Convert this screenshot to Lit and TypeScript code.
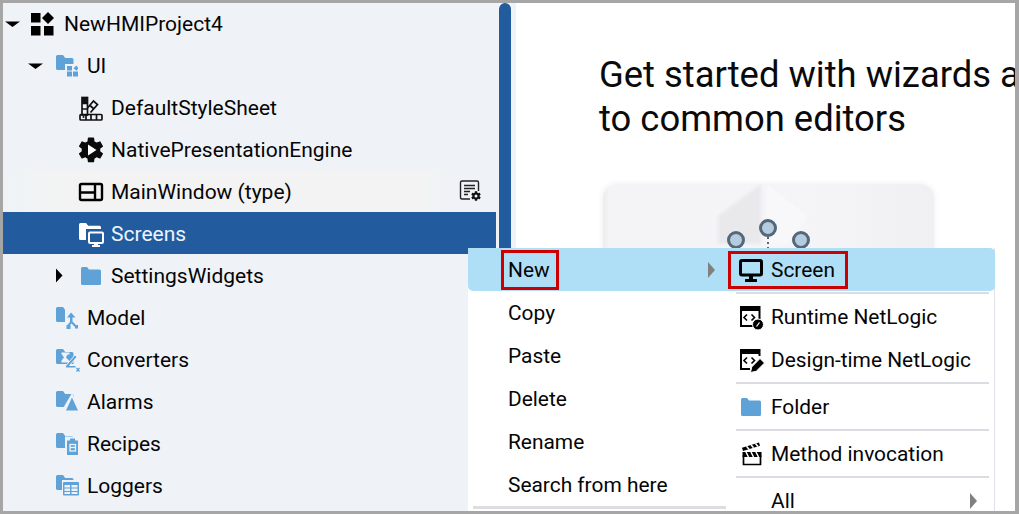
import { LitElement, html, svg, css } from "lit";
import { customElement } from "lit/decorators.js";

const GEAR = "M19.14 12.94c.04-.3.06-.61.06-.94 0-.32-.02-.64-.07-.94l2.03-1.58c.18-.14.23-.41.12-.61l-1.92-3.32c-.12-.22-.37-.29-.59-.22l-2.39.96c-.5-.38-1.03-.7-1.62-.94l-.36-2.54c-.04-.24-.24-.41-.48-.41h-3.84c-.24 0-.43.17-.47.41l-.36 2.54c-.59.24-1.13.57-1.62.94l-2.39-.96c-.22-.08-.47 0-.59.22L2.74 8.87c-.12.21-.08.47.12.61l2.03 1.58c-.05.3-.09.63-.09.94s.02.64.07.94l-2.03 1.58c-.18.14-.23.41-.12.61l1.92 3.32c.12.22.37.29.59.22l2.39-.96c.5.38 1.03.7 1.62.94l.36 2.54c.05.24.24.41.48.41h3.84c.24 0 .44-.17.47-.41l.36-2.54c.59-.24 1.13-.56 1.62-.94l2.39.96c.22.08.47 0 .59-.22l1.92-3.32c.12-.22.07-.47-.12-.61l-2.01-1.58z";
const FOLDER = "M4 3.5A1.5 1.5 0 0 1 5.5 2H11l2.2 3H20a1.5 1.5 0 0 1 1.5 1.5V17H5.5A1.5 1.5 0 0 1 4 15.5z";
const BLUE = "#5fa2d8";
const BG = "#eff3f7";

const icons: Record<string, () => unknown> = {
  project: () => html`<svg viewBox="0 0 26 26" width="26" height="26"><rect x="2" y="2" width="9.5" height="9.5"/><path d="M19 1l6 6-6 6-6-6z"/><rect x="2" y="15" width="9.5" height="9.5"/><rect x="15" y="15" width="9.5" height="9.5"/></svg>`,
  ui: () => html`<svg viewBox="0 0 26 26" width="26" height="26" fill="${BLUE}"><path d="${FOLDER}"/><rect x="13" y="11" width="13" height="14" fill="${BG}"/><rect x="15" y="13" width="5" height="4.5"/><path d="M24.2 12.6l2.6 2.6-2.6 2.6-2.6-2.6z"/><rect x="15" y="18.5" width="5" height="5"/><rect x="21" y="18.5" width="5" height="5"/></svg>`,
  style: () => html`<svg viewBox="0 0 26 26" width="26" height="26" fill="none" stroke="#111" stroke-width="1.7" style="overflow:visible"><rect x="6" y="2.5" width="5.5" height="17.5"/><path d="M6 8.3h5.5M6 14h5.5"/><path d="M11.5 13l6-7 4 3.5-7 8" /><path d="M14 10.5l4 3.5" /><rect x="4" y="19.5" width="22" height="5.5" rx="1"/><path d="M10 19.5v5.5M15 19.5v5.5M20.500 19.500v5.500"/><rect x="6" y="3" width="5" height="5" fill="#111" stroke="none"/><circle cx="7.500" cy="22" r="1" fill="#111" stroke="none"/></svg>`,
  engine: () => html`<svg viewBox="0 0 26 26" width="26" height="26" style="overflow:visible"><path transform="translate(-.5 -2.5) scale(1.29)" d="${GEAR}" fill="#0a0a0a"/><path d="M12 7.500l8.500 5.500-8.500 5.500z" fill="#fff"/></svg>`,
  window: () => html`<svg viewBox="0 0 26 26" width="26" height="26" fill="none" stroke="#000" stroke-width="2.400" style="overflow:visible"><rect x="4" y="5" width="22" height="16" rx="1.500"/><path d="M4 13.500h15M19 5v16"/></svg>`,
  screens: () => html`<svg viewBox="0 0 26 26" width="26" height="26" fill="#fff" style="overflow:visible"><path d="M3 3.500A1.500 1.500 0 0 1 4.500 2H10l2.200 2.800H23.500A1.500 1.500 0 0 1 25 6.300V19H4.500A1.500 1.500 0 0 1 3 17.500z"/><rect x="10" y="8" width="19" height="18" fill="#225c9f"/><rect x="13" y="11.500" width="14" height="10.500" rx="1" fill="none" stroke="#fff" stroke-width="2"/><rect x="18" y="22" width="4" height="2"/><rect x="16" y="24" width="8" height="2"/></svg>`,
  folder: () => html`<svg viewBox="0 0 26 26" width="26" height="26" fill="${BLUE}" style="overflow:visible"><path d="M5 5.500A1.500 1.500 0 0 1 6.500 4H11l2 2.500h10.500A1.500 1.500 0 0 1 25 8v12.500a1.500 1.500 0 0 1-1.500 1.500h-17A1.500 1.500 0 0 1 5 20.500z"/></svg>`,
  mfolder: () => html`<svg viewBox="0 0 26 26" width="26" height="26" fill="${BLUE}"><path d="M3 5.500A1.500 1.500 0 0 1 4.500 4H9l2 2.500h10.500A1.500 1.500 0 0 1 23 8v12.500a1.500 1.500 0 0 1-1.500 1.500h-17A1.500 1.500 0 0 1 3 20.500z"/></svg>`,
  model: () => html`<svg viewBox="0 0 26 26" width="26" height="26" fill="${BLUE}"><path d="${FOLDER}"/><rect x="13" y="5" width="13" height="21" fill="${BG}"/><path d="M19 7.500l4.500 5h-3v4l5 5-1.500 1.500-4.500-4.500-3.500 3.500-1-1.500 3-3.500v-4.500h-3z"/><rect x="14.500" y="20" width="4" height="4"/><rect x="23" y="20" width="3.500" height="3.500"/></svg>`,
  conv: () => html`<svg viewBox="0 0 26 26" width="26" height="26" fill="${BLUE}" style="overflow:visible"><path d="${FOLDER}"/><path d="M9.500 5.500h8v2H15.500l-1.500 3 3 3v2h-7.500v-2l2.500-3-2-3h-.500z" fill="${BG}"/><path d="M23 8l2 2-7.500 8.500H24v2.500H13.500v-2z" stroke="${BG}" stroke-width="1"/><path d="M24.500 21l3 3.500M27.500 21l-3 3.500" stroke="${BLUE}" stroke-width="1.300" fill="none"/></svg>`,
  alarm: () => html`<svg viewBox="0 0 26 26" width="26" height="26" fill="${BLUE}" style="overflow:visible"><path d="M4 3.500A1.500 1.500 0 0 1 5.500 2H11l2.200 3H20a1.500 1.500 0 0 1 1.500 1.500V18H5.500A1.500 1.500 0 0 1 4 16.500z"/><path d="M20 4l8 17H10z" fill="${BG}"/><path d="M20 8.500l6 13H14z"/></svg>`,
  recipe: () => html`<svg viewBox="0 0 26 26" width="26" height="26" fill="${BLUE}" style="overflow:visible"><path d="${FOLDER}"/><rect x="13" y="5.500" width="14" height="19" fill="${BG}"/><path d="M15 9.500h3V7.500h5v2h3V24H15z"/><rect x="18" y="13.500" width="5.500" height="6.500" fill="none" stroke="${BG}" stroke-width="1.300"/><path d="M18 16.500h5.500" stroke="${BG}" stroke-width="1.300"/></svg>`,
  logger: () => html`<svg viewBox="0 0 26 26" width="26" height="26" fill="${BLUE}" style="overflow:visible"><path d="${FOLDER}"/><rect x="10" y="7" width="18" height="17" fill="${BG}"/><rect x="11" y="9" width="16" height="13.500" rx="1"/><g fill="${BG}"><rect x="12.500" y="12" width="5.500" height="2.500"/><rect x="19.500" y="12" width="6" height="2.500"/><rect x="12.500" y="15.500" width="5.500" height="2.500"/><rect x="19.500" y="15.500" width="6" height="2.500"/><rect x="12.500" y="19" width="5.500" height="2"/><rect x="19.500" y="19" width="6" height="2"/></g></svg>`,
  doc: () => html`<svg viewBox="0 0 24 24" width="24" height="24" fill="none" stroke="#222" stroke-width="1.400"><path d="M12 20H4a1.500 1.500 0 0 1-1.500-1.500V3.500A1.500 1.500 0 0 1 4 2h15a1.500 1.500 0 0 1 1.500 1.500V12"/><path d="M6 6.500h11M6 9.500h11M6 12.500h6M6 15.500h4"/><g transform="translate(12 11) scale(.5)"><path d="${GEAR}" fill="#111" stroke="none"/><circle cx="12" cy="12" r="3" fill="${BG}" stroke="none"/></g></svg>`,
  monitor: () => html`<svg viewBox="0 0 26 26" width="26" height="26" fill="#000"><rect x="2.500" y="3.500" width="21" height="14.500" rx="1.500" fill="none" stroke="#000" stroke-width="3"/><rect x="11" y="19" width="4" height="3"/><rect x="7" y="22" width="12" height="3" rx=".5"/></svg>`,
  runtime: () => html`<svg viewBox="0 0 26 26" width="26" height="26" style="overflow:visible"><rect x="2" y="2" width="20" height="5" fill="#000"/><path d="M3 3h18.500v12M3 3v19h12" fill="none" stroke="#000" stroke-width="2"/><path d="M9 10.500l-3 3 3 3M13.500 10.500l3 3-3 3" fill="none" stroke="#000" stroke-width="1.600"/><circle cx="20" cy="20.500" r="5.500" fill="#000" stroke="#fff" stroke-width="1"/><path d="M18.500 22.500l3-4" stroke="#fff" stroke-width="1.200"/></svg>`,
  design: () => html`<svg viewBox="0 0 26 26" width="26" height="26" style="overflow:visible"><path d="M2 2h20v5H2z" fill="#000"/><path d="M3 3h18.500v6M3 3v19h9" fill="none" stroke="#000" stroke-width="2"/><path d="M9 10.500l-3 3 3 3M13.500 10.500l3 3-3 3" fill="none" stroke="#000" stroke-width="1.600"/><path d="M12.500 25.500l1.200-5.500 8.300-8.500 4.500 4.500-8.300 8.300z" fill="#000" stroke="#fff" stroke-width="1"/></svg>`,
  clapper: () => html`<svg viewBox="0 0 26 26" width="26" height="26"><path d="M5.500 15h17v8.500h-17z" fill="none" stroke="#000" stroke-width="1.700"/><rect x="4.500" y="11" width="19" height="5" fill="#000"/><path d="M4 6.800L21 1.500l1 3.200L5 10z" fill="#000"/><path d="M8.500 5.200l2.500 3M13 3.800l2.500 3M17.500 2.500l2.500 3M8 11l2.500 5M13 11l2.500 5M18 11l2.500 5" stroke="#fff" stroke-width="1.500"/></svg>`,
};

const ROWS = [
  { label: "NewHMIProject4", level: 0, icon: "project", twist: "down" },
  { label: "UI", level: 1, icon: "ui", twist: "down" },
  { label: "DefaultStyleSheet", level: 2, icon: "style" },
  { label: "NativePresentationEngine", level: 2, icon: "engine" },
  { label: "MainWindow (type)", level: 2, icon: "window", hover: true },
  { label: "Screens", level: 2, icon: "screens", selected: true },
  { label: "SettingsWidgets", level: 2, icon: "folder", twist: "right" },
  { label: "Model", level: 1, icon: "model" },
  { label: "Converters", level: 1, icon: "conv" },
  { label: "Alarms", level: 1, icon: "alarm" },
  { label: "Recipes", level: 1, icon: "recipe" },
  { label: "Loggers", level: 1, icon: "logger" },
];
const INDENT = [0, 23, 47];
const LEFT_MENU = ["Copy", "Paste", "Delete", "Rename", "Search from here"];

@customElement("app-root")
export class AppRoot extends LitElement {
  static styles = css`
    :host { display: block; font-family: Roboto, "Liberation Sans", sans-serif; color: #050505; }
    .frame { position: relative; width: 1019px; height: 514px; box-sizing: border-box; border: solid #a6a6a6; border-width: 3px 4px 3px 3px; overflow: hidden; display: flex; background: #fff; }
    .tree { width: 493px; flex: none; padding-right: 3px; background: #eff3f7; }
    .rows { margin-top: -1px; }
    .row { display: flex; align-items: center; height: 42px; box-sizing: border-box; padding-top: 2px; font-size: 21px; position: relative; }
    .row.hover { background: linear-gradient(90deg, #eff3f7 0, #f3f3f3 60px, #f3f3f3 420px, #eff3f7 445px); }
    .row.selected { background: #225c9f; color: #eef4fb; }
    .twist { width: 16px; height: 16px; flex: none; margin-right: 10px; overflow: visible; }
    .icon { width: 26px; height: 26px; flex: none; margin-right: 9px; display: flex; }
    .end { position: absolute; right: 14px; top: 9px; display: flex; }
    .scroll { width: 12px; flex: none; background: #225c9f; border-radius: 6px 6px 0 0; }
    .strip { width: 5px; flex: none; background: #eff3f7; }
    .main { flex: 1; padding: 50px 0 0 83px; overflow: hidden; min-width: 0; }
    h1 { margin: 0; font-weight: 400; font-size: 36.4px; line-height: 44px; white-space: nowrap; color: #0a0a0a; }
    .card { position: relative; margin: 43px 0 0 4px; width: 331px; height: 220px; border-radius: 14px; overflow: hidden; box-shadow: 0 0 6px rgba(0,0,0,.08); background: linear-gradient(90deg, #ecebee 0, #f4f3f6 6px, #f5f4f7 60%, #f0eff2 100%); }
    .card svg { position: absolute; left: 0; top: 0; }
    .soft { filter: blur(1.5px); }
    .menu { position: absolute; left: 465px; top: 245px; display: flex; background: #fff; }
    .col-a { width: 259px; flex: none; }
    .col-b { width: 268px; flex: none; box-sizing: border-box; border-right: 1px solid #dfe3e7; }
    .m-row { display: flex; align-items: center; height: 43px; font-size: 20.9px; box-sizing: border-box; }
    .col-a .m-row { padding-left: 40px; }
    .col-b .m-row { padding-left: 11px; }
    .m-row.on { background: #aedff7; }
    .col-a .m-row.on { border-radius: 0 0 0 5px; padding-right: 12px; justify-content: space-between; }
    .col-b .m-row.on { border-radius: 0 5px 5px 0; margin-right: -1px; }
    .col-b .m-row.more { padding-right: 17px; }
    .m-icon { width: 26px; height: 26px; flex: none; margin-right: 7px; display: flex; }
    .pad { width: 33px; flex: none; }
    .grow { flex: 1; }
    .boxed { display: inline-flex; align-items: center; box-sizing: border-box; outline: 3px solid #cc0000; outline-offset: -3px; }
    .new { height: 40px; margin-left: -7px; padding: 0 7px; width: 58px; }
    .scr { height: 38px; margin-left: -10px; padding: 0 10px; width: 120px; }
    .arrow { width: 0; height: 0; border-style: solid; border-width: 8px 0 8px 7px; border-color: transparent transparent transparent #808080; }
    .div { height: 4px; display: flex; align-items: center; }
    .div i { display: block; height: 2px; flex: 1; background: #d9dde2; }
    .col-b .div { padding: 0 5px 0 9px; }
    .col-a .div { padding: 0 1px 0 5px; height: 5px; margin-top: -1px; }
    .col-a .div i { height: 3px; background: #dbdde0; }
  `;

  private row(r: (typeof ROWS)[number]) {
    const cls = `row${r.hover ? " hover" : ""}${r.selected ? " selected" : ""}`;
    return html`<div class=${cls} style="padding-left:${INDENT[r.level]}px">
      <svg class="twist" viewBox="0 0 16 16">
        ${r.twist === "down" ? svg`<path d="M2 5.500h15L9.500 11z" fill="#000"></path>` : ""}
        ${r.twist === "right" ? svg`<path d="M6 .5l6.500 7L6 14.500z" fill="#000"></path>` : ""}
      </svg>
      <span class="icon">${icons[r.icon]()}</span>
      <span>${r.label}</span>
      ${r.hover ? html`<span class="end">${icons.doc()}</span>` : ""}
    </div>`;
  }

  render() {
    return html`<div class="frame">
      <div class="tree"><div class="rows">${ROWS.map((r) => this.row(r))}</div></div>
      <div class="scroll"></div>
      <div class="strip"></div>
      <div class="main">
        <h1>Get started with wizards and shortcuts<br />to common editors</h1>
        <div class="card">
          <svg width="331" height="220" viewBox="0 0 331 220">
            <g class="soft">
              <path d="M115 32L158 0V60H115z" fill="#e9e8eb"></path>
              <path d="M163 0L205 32 185 60H163z" fill="#f8f8fa"></path>
            </g>
            <g fill="#b4cbe0" stroke="#55687a" stroke-width="3">
              <circle cx="133" cy="56" r="7.500"></circle>
              <circle cx="165" cy="44" r="7.500"></circle>
              <circle cx="198" cy="56" r="7.500"></circle>
            </g>
            <path d="M165 53v12" stroke="#55687a" stroke-width="2" stroke-dasharray="2 3"></path>
          </svg>
        </div>
      </div>
      <div class="menu">
        <div class="col-a">
          <div class="m-row on"><span class="boxed new">New</span><span class="arrow"></span></div>
          ${LEFT_MENU.map((m) => html`<div class="m-row">${m}</div>`)}
          <div class="div"><i></i></div>
        </div>
        <div class="col-b">
          <div class="m-row on"><span class="boxed scr"><span class="m-icon">${icons.monitor()}</span>Screen</span></div>
          <div class="div"><i></i></div>
          <div class="m-row"><span class="m-icon">${icons.runtime()}</span>Runtime NetLogic</div>
          <div class="m-row"><span class="m-icon">${icons.design()}</span>Design-time NetLogic</div>
          <div class="div"><i></i></div>
          <div class="m-row"><span class="m-icon">${icons.mfolder()}</span>Folder</div>
          <div class="div"><i></i></div>
          <div class="m-row"><span class="m-icon">${icons.clapper()}</span>Method invocation</div>
          <div class="div"><i></i></div>
          <div class="m-row more"><span class="pad"></span>All<span class="grow"></span><span class="arrow"></span></div>
        </div>
      </div>
    </div>`;
  }
}
